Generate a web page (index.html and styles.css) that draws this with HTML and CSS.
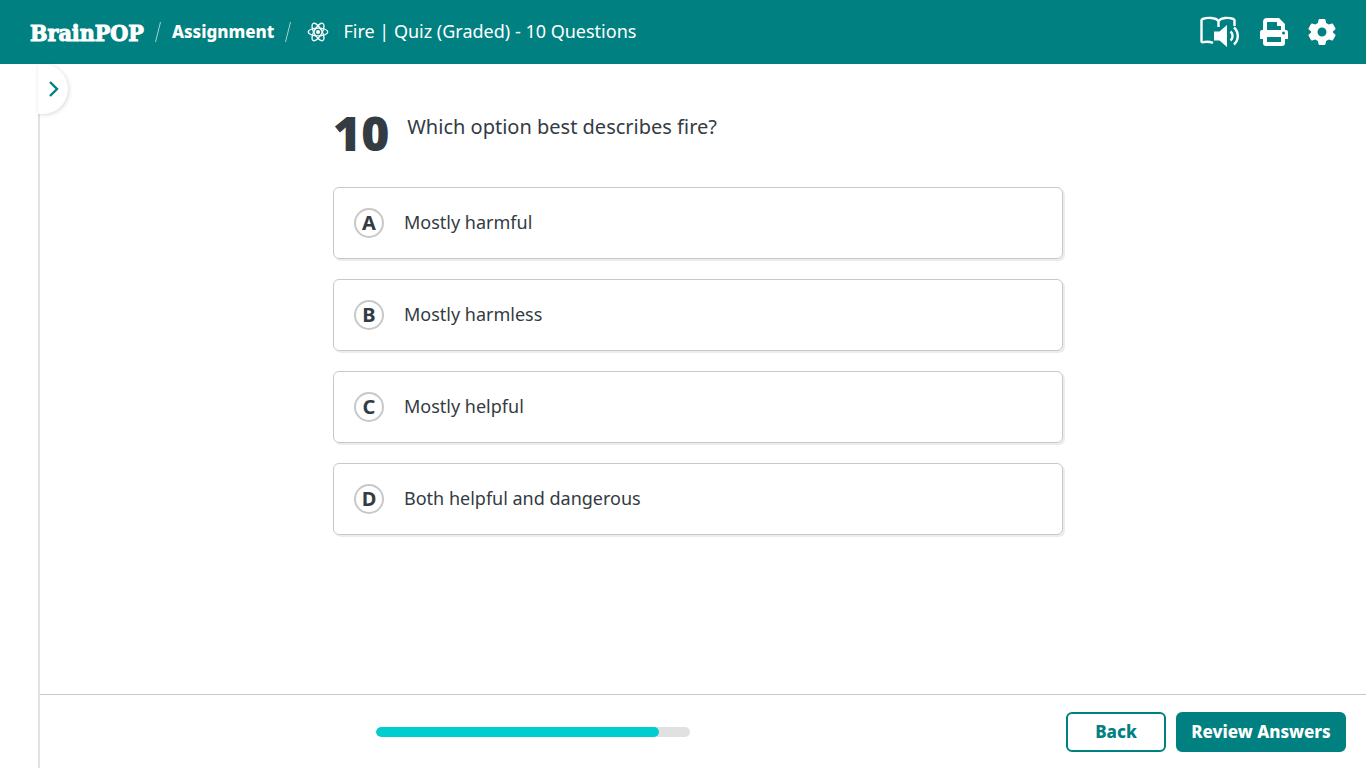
FILE: index.html
```html
<!DOCTYPE html>
<html lang="en">
<head>
  <meta charset="UTF-8" />
  <meta name="viewport" content="width=device-width, initial-scale=1.0" />
  <title>Fire | Quiz (Graded) - BrainPOP</title>
  <link rel="stylesheet" href="styles.css">
</head>
<body>
  <header class="topbar">
    <nav class="breadcrumb">
      <a class="logo" href="#">BrainPOP</a>
      <svg class="slash" viewBox="0 0 8 20" aria-hidden="true"><path d="M1.5 20 6.5 0"/></svg>
      <a class="crumb" href="#">Assignment</a>
      <svg class="slash" viewBox="0 0 8 20" aria-hidden="true"><path d="M1.5 20 6.5 0"/></svg>
      <svg class="atom" viewBox="0 0 22 20" aria-hidden="true">
        <ellipse cx="11" cy="10" rx="9.8" ry="3.9"/>
        <ellipse cx="11" cy="10" rx="9.8" ry="3.9" transform="rotate(60 11 10)"/>
        <ellipse cx="11" cy="10" rx="9.8" ry="3.9" transform="rotate(120 11 10)"/>
        <circle class="core" cx="11" cy="10" r="2"/>
      </svg>
      <span class="title">Fire | Quiz (Graded) - 10 Questions</span>
    </nav>
    <div class="tools">
      <button class="tool reader" aria-label="Immersive reader">
        <svg viewBox="0 0 40 32">
          <path class="line" d="M18.500 11V5C15.500 1.500 8 1.200 2.500 3q-1 .4-1 1.500V25q0 1.500 1.500 1.200c3.500-.9 6.500-.7 10 .6M18.500 5C21.500 1.500 28 1.200 33.500 3q1 .4 1 1.500V10"/>
          <path d="M14 15.500h5.500l7.500-6.500v22l-7.500-6.500H14z"/>
          <path class="line" d="M30.500 15.500c2.800 2.500 2.800 6.500 0 9M34 11.500c5 4.500 5 12.500 0 17"/>
        </svg>
      </button>
      <button class="tool" aria-label="Print">
        <svg viewBox="0 0 28 28">
          <path fill-rule="evenodd" d="M7 0h12l6 6v6h1a2 2 0 0 1 2 2v7h-3v4a3 3 0 0 1-3 3H6a3 3 0 0 1-3-3v-4H0v-7a2 2 0 0 1 2-2h1V4a4 4 0 0 1 4-4zM7 4v8h14V8h-4V4zM7 19v5h14v-5zM23.500 13.500a1.500 1.500 0 1 0 0 3 1.500 1.500 0 0 0 0-3z"/>
        </svg>
      </button>
      <button class="tool" aria-label="Settings">
        <svg viewBox="0 0 28 28">
          <path fill-rule="evenodd" d="M11.500 1h5q.8 0 1 1l.6 3 2.700 1.600 3-1q.8-.3 1.200.4l2.400 4.200q.4.700-.2 1.300L24.900 13.500v1l2.300 2q.6.600.2 1.300L25 22q-.4.700-1.200.4l-3-1L18.100 23l-.6 3q-.2 1-1 1h-5q-.8 0-1-1l-.6-3-2.700-1.600-3 1Q3.400 22.700 3 22L.6 17.800q-.4-.7.2-1.300l2.300-2v-1l-2.300-2q-.6-.6-.2-1.300L3 6q.4-.7 1.200-.4l3 1L9.900 5l.6-3q.2-1 1-1zM14 9.500a4.500 4.500 0 1 0 0 9 4.500 4.500 0 0 0 0-9z"/>
        </svg>
      </button>
    </div>
  </header>

  <div class="page">
    <aside class="sidebar">
      <button class="toggle" aria-label="Open question list">
        <svg viewBox="0 0 12 16"><path d="M2 1 9 8l-7 7"/></svg>
      </button>
    </aside>

    <main class="quiz">
      <form class="question" id="quiz">
        <div class="prompt">
          <span class="number">10</span>
          <h1 class="text">Which option best describes fire?</h1>
        </div>
        <label class="option">
          <span class="letter"><input type="radio" name="answer" value="a"><b>A</b></span>
          <span class="answer">Mostly harmful</span>
        </label>
        <label class="option">
          <span class="letter"><input type="radio" name="answer" value="b"><b>B</b></span>
          <span class="answer">Mostly harmless</span>
        </label>
        <label class="option">
          <span class="letter"><input type="radio" name="answer" value="c"><b>C</b></span>
          <span class="answer">Mostly helpful</span>
        </label>
        <label class="option">
          <span class="letter"><input type="radio" name="answer" value="d"><b>D</b></span>
          <span class="answer">Both helpful and dangerous</span>
        </label>
      </form>

      <footer class="bottom">
        <progress class="progress" value="9" max="10" aria-label="Quiz progress"></progress>
        <div class="actions">
          <button class="btn back" type="button">Back</button>
          <button class="btn review" type="submit" form="quiz">Review Answers</button>
        </div>
      </footer>
    </main>
  </div>
</body>
</html>
```
FILE: styles.css
```css
* {
  box-sizing: border-box;
}

body {
  margin: 0;
  min-height: 100vh;
  display: flex;
  flex-direction: column;
  font-family: "Noto Sans", sans-serif;
  color: #333b43;
  background: #fff;
}

button {
  font-family: inherit;
  cursor: pointer;
}

/* top bar */
.topbar {
  display: flex;
  align-items: center;
  justify-content: space-between;
  height: 64px;
  padding: 0 30px;
  background: #008080;
  color: #fff;
}

.breadcrumb {
  display: flex;
  align-items: center;
}

.breadcrumb a {
  color: #fff;
  text-decoration: none;
}

.logo {
  font-family: "DejaVu Serif Condensed", "DejaVu Serif", serif;
  font-size: 23px;
  font-weight: bold;
  -webkit-text-stroke: 1px #fff;
}

.crumb {
  padding-bottom: 2px;
  font-size: 17px;
  font-weight: 800;
}

.title {
  padding-bottom: 2px;
  font-size: 18px;
}

.slash {
  width: 8px;
  height: 20px;
  margin: 0 10px;
  fill: none;
  stroke: #a6d2d2;
}

.atom {
  width: 22px;
  height: 20px;
  margin: 0 14px 0 5px;
  fill: none;
  stroke: #fff;
  stroke-width: 1.3;
}

.atom .core {
  fill: #fff;
  stroke: none;
}

.tools {
  display: flex;
  align-items: center;
  gap: 20px;
}

.tool {
  width: 28px;
  height: 28px;
  padding: 0;
  border: none;
  background: none;
}

.tool svg {
  display: block;
  width: 100%;
  height: 100%;
  fill: #fff;
}

.reader {
  width: 40px;
  height: 32px;
}

.tool .line {
  fill: none;
  stroke: #fff;
  stroke-width: 2.4;
}

/* question list drawer */
.page {
  flex: 1;
  display: flex;
}

.sidebar {
  width: 40px;
  border-right: 2px solid #e1e1e1;
}

.toggle {
  display: flex;
  align-items: center;
  width: 30px;
  height: 50px;
  margin-left: 38px;
  padding: 0 0 0 10px;
  border: none;
  border-radius: 0 25px 25px 0;
  background: #fff;
  box-shadow: 1px 1px 4px rgba(0, 0, 0, 0.15);
}

.toggle svg {
  flex: none;
  width: 12px;
  height: 16px;
  fill: none;
  stroke: #008080;
  stroke-width: 2.4;
}

/* quiz */
.quiz {
  flex: 1;
  display: flex;
  flex-direction: column;
}

.question {
  flex: 1;
  display: flex;
  flex-direction: column;
  gap: 20px;
  width: 100%;
  max-width: 740px;
  margin: 0 auto;
  padding: 43px 10px 20px 0;
}

.prompt {
  display: flex;
  gap: 18px;
  height: 60px;
}

.number {
  font-size: 48px;
  font-weight: 900;
  line-height: 52px;
}

.text {
  margin: 0;
  font-size: 20px;
  font-weight: normal;
  line-height: 40px;
}

.option {
  display: flex;
  align-items: center;
  gap: 20px;
  min-height: 72px;
  padding: 0 20px;
  border: 1px solid #c8c8c8;
  border-radius: 6px;
  box-shadow: 2px 2px 0 #ececec;
  font-size: 18px;
  cursor: pointer;
}

.answer,
.letter b {
  padding-bottom: 2px;
}

.letter {
  display: grid;
  place-items: center;
  font-size: 20px;
}

.letter input,
.letter b {
  grid-area: 1 / 1;
}

.letter input {
  appearance: none;
  width: 30px;
  height: 30px;
  margin: 0;
  border: 2px solid #c8c8c8;
  border-radius: 50%;
}

.letter input:checked {
  border-color: #008080;
}

/* bottom bar */
.bottom {
  display: flex;
  align-items: center;
  justify-content: space-between;
  height: 74px;
  padding: 0 20px 0 336px;
  border-top: 1px solid #c8c8c8;
}

.progress {
  appearance: none;
  width: 314px;
  height: 10px;
  border: none;
  border-radius: 5px;
  background: #e1e1e1;
  overflow: hidden;
}

.progress::-webkit-progress-bar {
  background: #e1e1e1;
}

.progress::-webkit-progress-value {
  border-radius: 5px;
  background: #00cdcd;
}

.actions {
  display: flex;
  gap: 10px;
}

.btn {
  min-width: 100px;
  height: 40px;
  padding: 0 12px;
  border: 2px solid #008080;
  border-radius: 6px;
  font-size: 17px;
  font-weight: 800;
}

.back {
  background: #fff;
  color: #008080;
}

.review {
  width: 170px;
  background: #008080;
  color: #fff;
}
```
